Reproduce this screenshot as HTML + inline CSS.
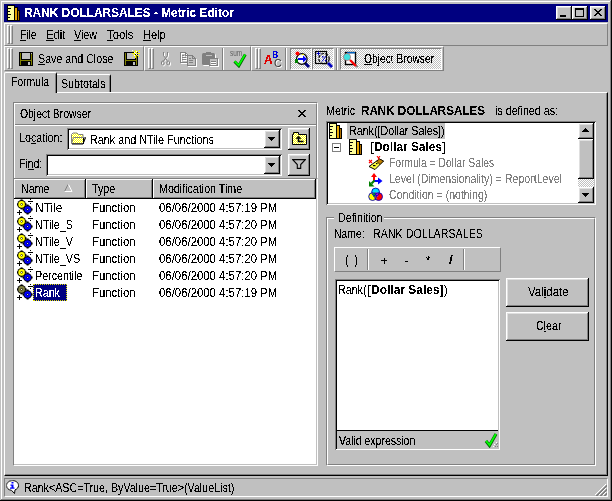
<!DOCTYPE html>
<html><head><meta charset="utf-8"><title>RANK DOLLARSALES - Metric Editor</title>
<style>
*{box-sizing:border-box;margin:0;padding:0}
html,body{width:612px;height:501px;overflow:hidden;background:#c0c0c0}
body{position:relative;font-family:"Liberation Sans",sans-serif;font-size:12.5px;line-height:13px;color:#000}
.a{position:absolute}
.t{position:absolute;white-space:nowrap;transform-origin:0 0;line-height:13px;filter:url(#thr)}
.b,b{font-weight:bold}
.g{color:#808080}
u{text-decoration:underline;text-decoration-thickness:1px;text-underline-offset:0.5px}
.hl{position:absolute;height:1px}
.vl{position:absolute;width:1px}
.W{background:#fff}.D{background:#808080}.K{background:#000}.L{background:#dfdfdf}
.raised{position:absolute;border:1px solid;border-color:#fff #808080 #808080 #fff}
.etch{position:absolute;border:1px solid;border-color:#808080 #fff #fff #808080}
.btn{position:absolute;background:#c0c0c0;box-shadow:inset -1px -1px 0 #000,inset 1px 1px 0 #fff,inset -2px -2px 0 #808080,inset 2px 2px 0 #dfdfdf}
.hdr{position:absolute;background:#c0c0c0;box-shadow:inset -1px -1px 0 #000,inset 1px 1px 0 #fff,inset -2px -2px 0 #808080}
.sunk{position:absolute;box-shadow:inset 1px 1px 0 #808080,inset -1px -1px 0 #fff,inset 2px 2px 0 #000,inset -2px -2px 0 #c0c0c0}
.dith{background-image:repeating-conic-gradient(#fff 0 25%,#c0c0c0 0 50%);background-size:2px 2px}
.chk{position:absolute;border:1px solid;border-color:#808080 #fff #fff #808080;background-image:repeating-conic-gradient(#fff 0 25%,#c0c0c0 0 50%);background-size:2px 2px}
.grip{position:absolute;width:3px;border:1px solid;border-color:#fff #808080 #808080 #fff}
</style></head><body>
<svg width="0" height="0" style="position:absolute"><filter id="thr" x="-5%" y="-5%" width="110%" height="110%" color-interpolation-filters="sRGB"><feComponentTransfer><feFuncA type="discrete" tableValues="0 0 0 0 0 0 0 0 0 1 1 1 1 1 1 1 1 1 1 1"/></feComponentTransfer></filter></svg>
<!-- window frame -->
<div class="a" style="left:0;top:0;width:612px;height:501px;box-shadow:inset -1px -1px 0 #000,inset 1px 1px 0 #c0c0c0,inset -2px -2px 0 #808080,inset 2px 2px 0 #fff"></div>
<!-- title bar -->
<div class="a" style="left:4px;top:4px;width:604px;height:18px;background:#000080"></div>
<svg class="a" style="left:7px;top:5px" width="13" height="16" viewBox="0 0 13 16" shape-rendering="crispEdges"><rect x="0" y="0" width="8" height="16" fill="#000"/><rect x="1" y="1" width="6" height="14" fill="#ffff99"/><rect x="1" y="3" width="3" height="1" fill="#000"/><rect x="1" y="6" width="2" height="1" fill="#000"/><rect x="1" y="9" width="3" height="1" fill="#000"/><rect x="1" y="12" width="2" height="1" fill="#000"/><rect x="8" y="2" width="3" height="14" fill="#000"/><rect x="8" y="3" width="2" height="12" fill="#e8a800"/><rect x="11" y="5" width="2" height="11" fill="#000"/><rect x="11" y="6" width="1" height="9" fill="#b07000"/></svg>
<div class="t b" style="left:24px;top:7px;transform:scaleX(0.95);color:#fff;">RANK DOLLARSALES - Metric Editor</div>
<div class="btn" style="left:556px;top:6px;width:16px;height:14px"><div class="a K" style="left:4px;top:9px;width:6px;height:2px"></div></div>
<div class="btn" style="left:572px;top:6px;width:16px;height:14px"><div class="a" style="left:3px;top:2px;width:9px;height:9px;border:1px solid #000;border-top-width:2px"></div></div>
<div class="btn" style="left:590px;top:6px;width:16px;height:14px"><svg class="a" style="left:4px;top:3px" width="8" height="7" viewBox="0 0 8 7" shape-rendering="crispEdges"><path d="M0 0h2v1h1v1h2v-1h1v-1h2v1h-1v1h-1v1h-1v1h1v1h1v1h1v1h-2v-1h-1v-1h-2v1h-1v1h-2v-1h1v-1h1v-1h1v-1h-1v-1h-1v-1h-1z" fill="#000"/></svg></div>

<!-- menu band -->
<div class="raised" style="left:4px;top:23px;width:604px;height:23px"></div>
<div class="grip" style="left:7px;top:25px;height:19px"></div><div class="grip" style="left:10px;top:25px;height:19px"></div>
<div class="t " style="left:20px;top:29px;transform:scaleX(0.82);"><u>F</u>ile</div>
<div class="t " style="left:46px;top:29px;transform:scaleX(0.9);"><u>E</u>dit</div>
<div class="t " style="left:74px;top:29px;transform:scaleX(0.855);"><u>V</u>iew</div>
<div class="t " style="left:107px;top:29px;transform:scaleX(0.9);"><u>T</u>ools</div>
<div class="t " style="left:143px;top:29px;transform:scaleX(0.88);"><u>H</u>elp</div>

<!-- toolbar band -->
<div class="raised" style="left:4px;top:46px;width:140px;height:25px"></div>
<div class="raised" style="left:144px;top:46px;width:107px;height:25px"></div>
<div class="raised" style="left:251px;top:46px;width:193px;height:25px"></div>
<div class="grip" style="left:7px;top:48px;height:21px"></div><div class="grip" style="left:10px;top:48px;height:21px"></div>
<svg class="a" style="left:19px;top:52px" width="14" height="14" viewBox="0 0 14 14" shape-rendering="crispEdges"><rect x="0" y="0" width="14" height="14" fill="#000"/><rect x="1" y="1" width="12" height="12" fill="#808000"/><rect x="2" y="0" width="10" height="8" fill="#000"/><rect x="3" y="1" width="8" height="6" fill="#c0c0c0"/><rect x="12" y="1" width="1" height="1" fill="#c0c0c0"/><rect x="2" y="9" width="10" height="5" fill="#000"/><rect x="9" y="10" width="2" height="3" fill="#c0c0c0"/></svg>
<div class="t " style="left:38px;top:53px;transform:scaleX(0.855);"><u>S</u>ave and Close</div>
<svg class="a" style="left:124px;top:52px" width="14" height="14" viewBox="0 0 14 14" shape-rendering="crispEdges"><rect x="0" y="0" width="14" height="14" fill="#000"/><rect x="1" y="1" width="12" height="12" fill="#808000"/><rect x="2" y="0" width="10" height="8" fill="#000"/><rect x="3" y="1" width="8" height="6" fill="#c0c0c0"/><rect x="12" y="1" width="1" height="1" fill="#c0c0c0"/><rect x="2" y="9" width="10" height="5" fill="#000"/><rect x="9" y="10" width="2" height="3" fill="#c0c0c0"/></svg><svg class="a" style="left:131px;top:49px" width="10" height="10" viewBox="0 0 10 10" shape-rendering="crispEdges"><g fill="#ffff00"><rect x="4" y="1" width="1" height="3"/><rect x="4" y="6" width="1" height="3"/><rect x="1" y="4" width="3" height="1"/><rect x="6" y="4" width="3" height="1"/><rect x="2" y="2" width="1" height="1"/><rect x="6" y="2" width="1" height="1"/><rect x="2" y="6" width="1" height="1"/><rect x="6" y="6" width="1" height="1"/><rect x="8" y="1" width="1" height="1"/><rect x="5" y="3" width="1" height="1"/><rect x="3" y="5" width="1" height="1"/><rect x="7" y="7" width="1" height="1"/><rect x="1" y="8" width="1" height="1"/></g><g fill="#fff"><rect x="3" y="3" width="1" height="1"/><rect x="5" y="5" width="1" height="1"/><rect x="4" y="4" width="1" height="1"/><rect x="5" y="2" width="1" height="1"/><rect x="1" y="1" width="1" height="1"/><rect x="3" y="6" width="1" height="1"/></g></svg>
<div class="grip" style="left:148px;top:48px;height:21px"></div><div class="grip" style="left:151px;top:48px;height:21px"></div>
<svg class="a" style="left:161px;top:52px" width="12" height="15" viewBox="0 0 12 15"><g fill="none" stroke="#fff" transform="translate(1 1)"><path d="M2.500 0v3.500l4 5.500M6.500 0v3.500l-4 5.500"/><ellipse cx="1.800" cy="11" rx="1.400" ry="2"/><ellipse cx="7.200" cy="11" rx="1.400" ry="2"/></g><g fill="none" stroke="#808080"><path d="M2.500 0v3.500l4 5.500M6.500 0v3.500l-4 5.500"/><ellipse cx="1.800" cy="11" rx="1.400" ry="2"/><ellipse cx="7.200" cy="11" rx="1.400" ry="2"/></g></svg><svg class="a" style="left:180px;top:52px" width="17" height="15" viewBox="0 0 17 15" shape-rendering="crispEdges"><g transform="translate(1 1)"><path d="M0.5 0.5h5l3 3v7h-8z M5.5 0.5v3h3" fill="none" stroke="#fff"/><path d="M2 3.5h2M2 5.5h4M2 7.5h4" stroke="#fff"/><path d="M7.5 3.5h5l3 3v7h-8z M12.5 3.5v3h3" fill="none" stroke="#fff"/><path d="M9 6.5h2M9 8.5h4M9 10.5h4" stroke="#fff"/></g><path d="M0.5 0.5h5l3 3v7h-8z M5.5 0.5v3h3" fill="none" stroke="#808080"/><path d="M2 3.5h2M2 5.5h4M2 7.5h4" stroke="#808080"/><rect x="8" y="4" width="7" height="9" fill="#c0c0c0"/><path d="M7.5 3.5h5l3 3v7h-8z M12.5 3.5v3h3" fill="none" stroke="#808080"/><path d="M9 6.5h2M9 8.5h4M9 10.5h4" stroke="#808080"/></svg><svg class="a" style="left:202px;top:52px" width="17" height="15" viewBox="0 0 17 15"><rect x="1" y="2" width="13" height="12" rx="1.500" fill="#fff"/><rect x="0" y="1" width="13" height="12" rx="1.500" fill="#808080"/><rect x="4" y="0" width="5" height="2" fill="#808080"/><rect x="4" y="3" width="6" height="1" fill="#c0c0c0"/><rect x="8.500" y="7.500" width="8" height="7" fill="#808080" stroke="#fff"/><rect x="7.500" y="6.500" width="8" height="7" fill="#c0c0c0" stroke="#808080"/><path d="M9 10.500h5M9 12.500h5" stroke="#fff"/><path d="M9 9.500h5M9 11.500h5" stroke="#808080"/></svg>
<div class="vl D" style="left:222px;top:48px;height:22px"></div><div class="vl W" style="left:223px;top:48px;height:22px"></div>
<div class="t " style="left:230px;top:47px;transform:scaleX(0.72);font-size:9px;filter:none;color:#606060;">sum</div><svg class="a" style="left:232px;top:51px" width="16" height="17" viewBox="0 0 16 17"><path d="M2.500 10.500l4.300 4.300l6.500-11.300" fill="none" stroke="#006000" stroke-width="3"/><path d="M2.500 10.200l4.200 4.100l6.400-10.800" fill="none" stroke="#00ff00" stroke-width="1.700"/></svg>
<div class="grip" style="left:255px;top:48px;height:21px"></div><div class="grip" style="left:258px;top:48px;height:21px"></div>
<div class="t b" style="left:264px;top:54px;transform:scaleX(1);font-size:12px;color:#e00000;">A</div><div class="t b" style="left:272px;top:48px;transform:scaleX(0.95);font-size:10px;color:#0000e0;font-family:'Liberation Serif',serif;">B</div><div class="t " style="left:274px;top:57px;transform:scaleX(1.05);font-size:10px;color:#303030;filter:none;text-shadow:1px 1px 0 #fff;">C</div>
<div class="vl D" style="left:285px;top:48px;height:22px"></div><div class="vl W" style="left:286px;top:48px;height:22px"></div>
<div class="chk" style="left:290px;top:48px;width:22px;height:22px"></div><svg class="a" style="left:293px;top:50px" width="18" height="19" viewBox="0 0 18 19"><path d="M12 13l4 4" stroke="#000080" stroke-width="3"/><circle cx="8.8" cy="9" r="5.3" fill="#fff" stroke="#000" stroke-width="1.2"/><path d="M5 8h5v-2.5l4 3.5l-4 3.5v-2.5h-5z" fill="#0000ff"/><circle cx="4.5" cy="3.5" r="2" fill="#ff0000"/><rect x="2" y="9" width="3" height="4" fill="#008000"/><rect x="9" y="4" width="2" height="1" fill="#e0e000"/></svg>
<div class="chk" style="left:312px;top:48px;width:22px;height:22px"></div><svg class="a" style="left:314px;top:50px" width="19" height="19" viewBox="0 0 19 19"><rect x="1.5" y="1.5" width="11" height="12" fill="none" stroke="#000" stroke-width="1.2"/><path d="M14 13l4 4" stroke="#0000c0" stroke-width="3"/><circle cx="10" cy="8.7" r="5.2" fill="none" stroke="#000" stroke-width="1.2" stroke-dasharray="3 1.2"/><path d="M4.5 1.5v4M2.5 3.5h4" stroke="#0000c0"/><path d="M12 6l-4 5.5" stroke="#0000c0"/><rect x="8" y="6" width="1.5" height="1.5" fill="#0000c0"/><rect x="11" y="10" width="1.5" height="1.5" fill="#0000c0"/></svg>
<div class="vl D" style="left:336px;top:48px;height:22px"></div><div class="vl W" style="left:337px;top:48px;height:22px"></div>
<div class="chk" style="left:340px;top:48px;width:102px;height:22px"></div><svg class="a" style="left:342px;top:51px" width="16" height="17" viewBox="0 0 16 17"><rect x="3.5" y="1.5" width="10" height="12" fill="#fff" stroke="#000" stroke-width="1.4"/><rect x="5" y="1" width="8" height="1.4" fill="#0060c0"/><path d="M8 9l6.5 6.5" stroke="#808080" stroke-width="2" transform="translate(1 .6)"/><path d="M8 9l6 6" stroke="#ff0000" stroke-width="2.2"/><circle cx="5" cy="6" r="3.6" fill="#40e0e0"/><circle cx="5" cy="6" r="3.6" fill="none" stroke="#c04040" stroke-width=".5"/></svg>
<div class="t " style="left:364px;top:53px;transform:scaleX(0.82);"><u>O</u>bject Browser</div>

<!-- tab control -->
<div class="a" style="left:4px;top:92px;width:604px;height:384px;border:1px solid;border-color:#fff #000 #000 #fff"></div>
<div class="vl D" style="left:606px;top:93px;height:382px"></div>
<div class="hl D" style="left:5px;top:474px;width:602px"></div>
<div class="a" style="left:57px;top:74px;width:54px;height:18px;border-top:1px solid #fff;border-right:1px solid #000;border-radius:0 2px 0 0"></div>
<div class="vl D" style="left:109px;top:76px;height:16px"></div>
<div class="t " style="left:61px;top:78px;transform:scaleX(0.855);">Subtotals</div>
<div class="a" style="left:4px;top:72px;width:53px;height:21px;background:#c0c0c0;border:1px solid;border-color:#fff #000 #c0c0c0 #fff;border-bottom:none;border-radius:2px 2px 0 0"></div>
<div class="vl D" style="left:55px;top:74px;height:19px"></div>
<div class="t " style="left:11px;top:76px;transform:scaleX(0.83);">Formula</div>

<!-- object browser pane -->
<div class="etch" style="left:13px;top:102px;width:305px;height:364px"></div>
<div class="raised" style="left:14px;top:103px;width:303px;height:362px"></div>
<div class="t " style="left:20px;top:108px;transform:scaleX(0.83);">Object Browser</div>
<svg class="a" style="left:298px;top:110px" width="8" height="7" viewBox="0 0 8 7" shape-rendering="crispEdges"><path d="M0 0h2v1h1v1h2v-1h1v-1h2v1h-1v1h-1v1h-1v1h1v1h1v1h1v1h-2v-1h-1v-1h-2v1h-1v1h-2v-1h1v-1h1v-1h1v-1h-1v-1h-1v-1h-1z" fill="#000"/></svg>
<div class="hl D" style="left:15px;top:124px;width:301px"></div><div class="hl W" style="left:15px;top:125px;width:301px"></div>
<div class="t " style="left:19px;top:132px;transform:scaleX(0.855);">Lo<u>c</u>ation:</div>
<div class="sunk" style="left:67px;top:128px;width:215px;height:22px;background:#fff"></div>
<svg class="a" style="left:70px;top:132px" width="16" height="13" viewBox="0 0 16 13"><pattern id="yd1" width="2" height="2" patternUnits="userSpaceOnUse"><rect width="2" height="2" fill="#ffff00"/><rect width="1" height="1" fill="#fff"/><rect x="1" y="1" width="1" height="1" fill="#fff"/></pattern><path d="M1.500 11.500v-9l1.500-1.500h4l1.500 1.500h4.500v3" fill="url(#yd1)" stroke="#808080"/><path d="M1.500 11.500l2-6h12l-2.500 6z" fill="url(#yd1)" stroke="#808080"/><path d="M15.500 5.500l-2.500 6.500h-11" stroke="#000" fill="none"/><path d="M13.500 6v6" stroke="#000" fill="none"/></svg>
<div class="btn" style="left:264px;top:130px;width:16px;height:18px"><svg class="a" style="left:4px;top:7px" width="7" height="4" viewBox="0 0 7 4" shape-rendering="crispEdges"><rect x="0" y="0" width="7" height="1" fill="#000"/><rect x="1" y="1" width="5" height="1" fill="#000"/><rect x="2" y="2" width="3" height="1" fill="#000"/><rect x="3" y="3" width="1" height="1" fill="#000"/></svg></div>
<div class="t " style="left:90px;top:134px;transform:scaleX(0.865);">Rank and NTile Functions</div>
<div class="btn" style="left:288px;top:128px;width:22px;height:22px"></div><svg class="a" style="left:292px;top:132px" width="15" height="13" viewBox="0 0 15 13"><pattern id="yd2" width="2" height="2" patternUnits="userSpaceOnUse"><rect width="2" height="2" fill="#ffff00"/><rect width="1" height="1" fill="#fff"/><rect x="1" y="1" width="1" height="1" fill="#fff"/></pattern><path d="M.5 12.500v-10h1v-2h5v2h8v10z" fill="url(#yd2)" stroke="#000"/><path d="M4 6.500l2.500-2.500l2.500 2.500z" fill="#000" stroke="#000" stroke-width=".6"/><path d="M6.500 6v3.500h5" fill="none" stroke="#000" stroke-width="1.600"/></svg>
<div class="t " style="left:19px;top:158px;transform:scaleX(0.84);">Fi<u>n</u>d:</div>
<div class="sunk" style="left:46px;top:154px;width:236px;height:22px;background:#fff"></div>
<div class="btn" style="left:264px;top:156px;width:16px;height:18px"><svg class="a" style="left:4px;top:7px" width="7" height="4" viewBox="0 0 7 4" shape-rendering="crispEdges"><rect x="0" y="0" width="7" height="1" fill="#000"/><rect x="1" y="1" width="5" height="1" fill="#000"/><rect x="2" y="2" width="3" height="1" fill="#000"/><rect x="3" y="3" width="1" height="1" fill="#000"/></svg></div>
<div class="btn" style="left:288px;top:154px;width:22px;height:22px"></div><svg class="a" style="left:292px;top:159px" width="14" height="10" viewBox="0 0 14 10"><path d="M.7 .6h12.6l-4.6 4.9v3.9h-3.4v-3.9z" fill="#c0c0c0" stroke="#000" stroke-width="1.1"/></svg>

<!-- list view -->
<div class="a" style="left:13px;top:178px;width:305px;height:288px;background:#fff;border:1px solid;border-color:#808080 #fff #fff #808080"></div>
<div class="hl" style="left:14px;top:464px;width:303px;background:#c0c0c0"></div>
<div class="vl" style="left:316px;top:179px;height:286px;background:#c0c0c0"></div>
<div class="hdr" style="left:14px;top:179px;width:72px;height:20px"></div>
<div class="hdr" style="left:86px;top:179px;width:67px;height:20px"></div>
<div class="hdr" style="left:153px;top:179px;width:163px;height:20px"></div>
<div class="t " style="left:21px;top:183px;transform:scaleX(0.855);">Name</div>
<div class="t " style="left:92px;top:183px;transform:scaleX(0.855);">Type</div>
<div class="t " style="left:158.5px;top:183px;transform:scaleX(0.855);">Modification Time</div>
<svg class="a" style="left:64px;top:184px" width="9" height="8" viewBox="0 0 9 8"><path d="M.5 7.500L4 .5" stroke="#808080" fill="none"/><path d="M4.500 .5L8 7.500H.5" stroke="#fff" fill="none"/></svg>
<svg class="a" style="left:17px;top:199px" width="17" height="17" viewBox="0 0 17 17"><circle cx="4.6" cy="5.4" r="4.300" fill="#000"/><rect x="3.5999999999999996" y="0.40000000000000036" width="2" height="10" fill="#000"/><rect x="-0.40000000000000036" y="4.4" width="10" height="2" fill="#000"/><circle cx="4.6" cy="5.4" r="3.300" fill="#ffff00"/><circle cx="4.6" cy="5.4" r="1.100" fill="#000"/><circle cx="4.6" cy="5.4" r=".6" fill="#fff"/><circle cx="10.6" cy="10.5" r="4.300" fill="#000"/><rect x="9.6" y="5.5" width="2" height="10" fill="#000"/><rect x="5.6" y="9.5" width="10" height="2" fill="#000"/><circle cx="10.6" cy="10.5" r="3.300" fill="#0000ff"/><circle cx="10.6" cy="10.5" r="1.100" fill="#000"/><circle cx="10.6" cy="10.5" r=".6" fill="#fff"/><path d="M11 2.500h5M0 13.500h5M2.500 11v5" stroke="#000" stroke-width="1" fill="none"/><rect x="13" y="0" width="1" height="1"/><rect x="13" y="4" width="1" height="1"/></svg><div class="t " style="left:34.5px;top:202px;transform:scaleX(0.95);">NTile</div><div class="t " style="left:92px;top:202px;transform:scaleX(0.91);">Function</div><div class="t " style="left:159px;top:202px;transform:scaleX(0.91);">06/06/2000 4:57:19 PM</div>
<svg class="a" style="left:17px;top:216px" width="17" height="17" viewBox="0 0 17 17"><circle cx="4.6" cy="5.4" r="4.300" fill="#000"/><rect x="3.5999999999999996" y="0.40000000000000036" width="2" height="10" fill="#000"/><rect x="-0.40000000000000036" y="4.4" width="10" height="2" fill="#000"/><circle cx="4.6" cy="5.4" r="3.300" fill="#ffff00"/><circle cx="4.6" cy="5.4" r="1.100" fill="#000"/><circle cx="4.6" cy="5.4" r=".6" fill="#fff"/><circle cx="10.6" cy="10.5" r="4.300" fill="#000"/><rect x="9.6" y="5.5" width="2" height="10" fill="#000"/><rect x="5.6" y="9.5" width="10" height="2" fill="#000"/><circle cx="10.6" cy="10.5" r="3.300" fill="#0000ff"/><circle cx="10.6" cy="10.5" r="1.100" fill="#000"/><circle cx="10.6" cy="10.5" r=".6" fill="#fff"/><path d="M11 2.500h5M0 13.500h5M2.500 11v5" stroke="#000" stroke-width="1" fill="none"/><rect x="13" y="0" width="1" height="1"/><rect x="13" y="4" width="1" height="1"/></svg><div class="t " style="left:34.5px;top:219px;transform:scaleX(0.865);">NTile_S</div><div class="t " style="left:92px;top:219px;transform:scaleX(0.91);">Function</div><div class="t " style="left:159px;top:219px;transform:scaleX(0.91);">06/06/2000 4:57:20 PM</div>
<svg class="a" style="left:17px;top:233px" width="17" height="17" viewBox="0 0 17 17"><circle cx="4.6" cy="5.4" r="4.300" fill="#000"/><rect x="3.5999999999999996" y="0.40000000000000036" width="2" height="10" fill="#000"/><rect x="-0.40000000000000036" y="4.4" width="10" height="2" fill="#000"/><circle cx="4.6" cy="5.4" r="3.300" fill="#ffff00"/><circle cx="4.6" cy="5.4" r="1.100" fill="#000"/><circle cx="4.6" cy="5.4" r=".6" fill="#fff"/><circle cx="10.6" cy="10.5" r="4.300" fill="#000"/><rect x="9.6" y="5.5" width="2" height="10" fill="#000"/><rect x="5.6" y="9.5" width="10" height="2" fill="#000"/><circle cx="10.6" cy="10.5" r="3.300" fill="#0000ff"/><circle cx="10.6" cy="10.5" r="1.100" fill="#000"/><circle cx="10.6" cy="10.5" r=".6" fill="#fff"/><path d="M11 2.500h5M0 13.500h5M2.500 11v5" stroke="#000" stroke-width="1" fill="none"/><rect x="13" y="0" width="1" height="1"/><rect x="13" y="4" width="1" height="1"/></svg><div class="t " style="left:34.5px;top:236px;transform:scaleX(0.865);">NTile_V</div><div class="t " style="left:92px;top:236px;transform:scaleX(0.91);">Function</div><div class="t " style="left:159px;top:236px;transform:scaleX(0.91);">06/06/2000 4:57:20 PM</div>
<svg class="a" style="left:17px;top:250px" width="17" height="17" viewBox="0 0 17 17"><circle cx="4.6" cy="5.4" r="4.300" fill="#000"/><rect x="3.5999999999999996" y="0.40000000000000036" width="2" height="10" fill="#000"/><rect x="-0.40000000000000036" y="4.4" width="10" height="2" fill="#000"/><circle cx="4.6" cy="5.4" r="3.300" fill="#ffff00"/><circle cx="4.6" cy="5.4" r="1.100" fill="#000"/><circle cx="4.6" cy="5.4" r=".6" fill="#fff"/><circle cx="10.6" cy="10.5" r="4.300" fill="#000"/><rect x="9.6" y="5.5" width="2" height="10" fill="#000"/><rect x="5.6" y="9.5" width="10" height="2" fill="#000"/><circle cx="10.6" cy="10.5" r="3.300" fill="#0000ff"/><circle cx="10.6" cy="10.5" r="1.100" fill="#000"/><circle cx="10.6" cy="10.5" r=".6" fill="#fff"/><path d="M11 2.500h5M0 13.500h5M2.500 11v5" stroke="#000" stroke-width="1" fill="none"/><rect x="13" y="0" width="1" height="1"/><rect x="13" y="4" width="1" height="1"/></svg><div class="t " style="left:34.5px;top:253px;transform:scaleX(0.865);">NTile_VS</div><div class="t " style="left:92px;top:253px;transform:scaleX(0.91);">Function</div><div class="t " style="left:159px;top:253px;transform:scaleX(0.91);">06/06/2000 4:57:20 PM</div>
<svg class="a" style="left:17px;top:267px" width="17" height="17" viewBox="0 0 17 17"><circle cx="4.6" cy="5.4" r="4.300" fill="#000"/><rect x="3.5999999999999996" y="0.40000000000000036" width="2" height="10" fill="#000"/><rect x="-0.40000000000000036" y="4.4" width="10" height="2" fill="#000"/><circle cx="4.6" cy="5.4" r="3.300" fill="#ffff00"/><circle cx="4.6" cy="5.4" r="1.100" fill="#000"/><circle cx="4.6" cy="5.4" r=".6" fill="#fff"/><circle cx="10.6" cy="10.5" r="4.300" fill="#000"/><rect x="9.6" y="5.5" width="2" height="10" fill="#000"/><rect x="5.6" y="9.5" width="10" height="2" fill="#000"/><circle cx="10.6" cy="10.5" r="3.300" fill="#0000ff"/><circle cx="10.6" cy="10.5" r="1.100" fill="#000"/><circle cx="10.6" cy="10.5" r=".6" fill="#fff"/><path d="M11 2.500h5M0 13.500h5M2.500 11v5" stroke="#000" stroke-width="1" fill="none"/><rect x="13" y="0" width="1" height="1"/><rect x="13" y="4" width="1" height="1"/></svg><div class="t " style="left:34.5px;top:270px;transform:scaleX(0.855);">Percentile</div><div class="t " style="left:92px;top:270px;transform:scaleX(0.91);">Function</div><div class="t " style="left:159px;top:270px;transform:scaleX(0.91);">06/06/2000 4:57:20 PM</div>
<div class="a" style="left:33px;top:284px;width:34px;height:17px;background:#000080;border:1px dotted #e0e000"></div><svg class="a" style="left:17px;top:284px" width="17" height="17" viewBox="0 0 17 17"><circle cx="4.6" cy="5.4" r="4.300" fill="#000"/><rect x="3.5999999999999996" y="0.40000000000000036" width="2" height="10" fill="#000"/><rect x="-0.40000000000000036" y="4.4" width="10" height="2" fill="#000"/><circle cx="4.6" cy="5.4" r="3.300" fill="#808040"/><circle cx="4.6" cy="5.4" r="1.100" fill="#000"/><circle cx="4.6" cy="5.4" r=".6" fill="#fff"/><circle cx="10.6" cy="10.5" r="4.300" fill="#000"/><rect x="9.6" y="5.5" width="2" height="10" fill="#000"/><rect x="5.6" y="9.5" width="10" height="2" fill="#000"/><circle cx="10.6" cy="10.5" r="3.300" fill="#0000ff"/><circle cx="10.6" cy="10.5" r="1.100" fill="#000"/><circle cx="10.6" cy="10.5" r=".6" fill="#fff"/><path d="M11 2.500h5M0 13.500h5M2.500 11v5" stroke="#000" stroke-width="1" fill="none"/><rect x="13" y="0" width="1" height="1"/><rect x="13" y="4" width="1" height="1"/></svg><div class="t " style="left:34.5px;top:287px;transform:scaleX(0.855);color:#fff;">Rank</div><div class="t " style="left:92px;top:287px;transform:scaleX(0.91);">Function</div><div class="t " style="left:159px;top:287px;transform:scaleX(0.91);">06/06/2000 4:57:19 PM</div>

<!-- right: metric label -->
<div class="t " style="left:326px;top:105px;transform:scaleX(0.855);">Metric</div>
<div class="t b" style="left:361px;top:105px;transform:scaleX(0.93);">RANK DOLLARSALES</div>
<div class="t " style="left:495px;top:105px;transform:scaleX(0.855);">is defined as:</div>
<!-- tree -->
<div class="sunk" style="left:326px;top:121px;width:270px;height:84px;background:#fff"></div>
<div class="a" style="left:347px;top:123px;width:98px;height:16px;background:#c0c0c0"></div>
<svg class="a" style="left:329px;top:123px" width="13" height="16" viewBox="0 0 13 16" shape-rendering="crispEdges"><rect x="0" y="0" width="8" height="16" fill="#000"/><rect x="1" y="1" width="6" height="14" fill="#ffff99"/><rect x="1" y="3" width="3" height="1" fill="#000"/><rect x="1" y="6" width="2" height="1" fill="#000"/><rect x="1" y="9" width="3" height="1" fill="#000"/><rect x="1" y="12" width="2" height="1" fill="#000"/><rect x="8" y="2" width="3" height="14" fill="#000"/><rect x="8" y="3" width="2" height="12" fill="#e8a800"/><rect x="11" y="5" width="2" height="11" fill="#000"/><rect x="11" y="6" width="1" height="9" fill="#b07000"/></svg>
<div class="t " style="left:348.5px;top:125px;transform:scaleX(0.855);">Rank([Dollar Sales])</div>
<div class="a" style="left:332px;top:143px;width:9px;height:9px;border:1px solid #808080"><div class="a K" style="left:1px;top:3px;width:5px;height:1px"></div></div>
<svg class="a" style="left:349px;top:139px" width="13" height="16" viewBox="0 0 13 16" shape-rendering="crispEdges"><rect x="0" y="0" width="8" height="16" fill="#000"/><rect x="1" y="1" width="6" height="14" fill="#ffff99"/><rect x="1" y="3" width="3" height="1" fill="#000"/><rect x="1" y="6" width="2" height="1" fill="#000"/><rect x="1" y="9" width="3" height="1" fill="#000"/><rect x="1" y="12" width="2" height="1" fill="#000"/><rect x="8" y="2" width="3" height="14" fill="#000"/><rect x="8" y="3" width="2" height="12" fill="#e8a800"/><rect x="11" y="5" width="2" height="11" fill="#000"/><rect x="11" y="6" width="1" height="9" fill="#b07000"/></svg>
<div class="t b" style="left:370px;top:141px;transform:scaleX(0.95);">[Dollar Sales]</div>
<svg class="a" style="left:368px;top:156px" width="17" height="15" viewBox="0 0 17 15"><path d="M1 10.500L11.500 3L15.500 5L7 13.500z" fill="#ffff40" stroke="#000" stroke-width="1"/><path d="M11.500 3L15.500 5L12 8.500L8.500 5.200z" fill="#c08000" stroke="#000" stroke-width=".7"/><rect x="5" y="9" width="2.500" height="1.200" fill="#000"/><rect x="8" y="7" width="1.500" height="1.200" fill="#000"/><path d="M1 4l3 3M4 4l-3 3" stroke="#f00" stroke-width="1.100"/><path d="M9 0l1.500 2l1.500-2M10.500 2v1.800" stroke="#f00" stroke-width="1.100" fill="none"/></svg><svg class="a" style="left:369px;top:173px" width="14" height="14" viewBox="0 0 14 14"><path d="M5 8v-5" stroke="#ff0000" stroke-width="2"/><path d="M2 4l3-4l3 4z" fill="#ff0000"/><path d="M5 8h5" stroke="#0000ff" stroke-width="2"/><path d="M9 4.500l4.500 3.500l-4.500 3.500z" fill="#0000ff"/><path d="M5.500 7.500l-3 3" stroke="#008000" stroke-width="2.200"/><path d="M0 8v5.500h5.500z" fill="#008000"/></svg><svg class="a" style="left:368px;top:187px" width="16" height="15" viewBox="0 0 16 15"><circle cx="7.600" cy="5" r="3.900" fill="#00e0ff"/><circle cx="4.600" cy="9.600" r="3.900" fill="#ffff00"/><circle cx="10.600" cy="9.600" r="3.900" fill="#ff0000"/><path d="M5 6.500l2.600-1.500v4l-2.600 1z" fill="#00c000"/><path d="M10.200 6.500l-2.600-1.500v4l2.600 1z" fill="#e000e0"/><path d="M5.800 11l1.800-2l1.800 2l-1.800 2.300z" fill="#ff9000"/><path d="M6.400 9l1.200-1.500l1.200 1.500z" fill="#fff"/><circle cx="7.600" cy="5" r="3.900" fill="none" stroke="#0000c0" stroke-width=".9"/><circle cx="4.600" cy="9.600" r="3.900" fill="none" stroke="#0000c0" stroke-width=".9"/><circle cx="10.600" cy="9.600" r="3.900" fill="none" stroke="#0000c0" stroke-width=".9"/></svg>
<div class="t g" style="left:388.5px;top:157px;transform:scaleX(0.825);">Formula = Dollar Sales</div>
<div class="t g" style="left:388.5px;top:173px;transform:scaleX(0.845);">Level (Dimensionality) = ReportLevel</div>
<div class="t g" style="left:388.5px;top:189px;transform:scaleX(0.845);">Condition = (nothing)</div>
<div class="a dith" style="left:578px;top:123px;width:16px;height:80px"></div>
<div class="btn" style="left:578px;top:123px;width:16px;height:16px"><svg class="a" style="left:4px;top:5px" width="7" height="4" viewBox="0 0 7 4" shape-rendering="crispEdges"><rect x="0" y="3" width="7" height="1" fill="#000"/><rect x="1" y="2" width="5" height="1" fill="#000"/><rect x="2" y="1" width="3" height="1" fill="#000"/><rect x="3" y="0" width="1" height="1" fill="#000"/></svg></div>
<div class="btn" style="left:578px;top:139px;width:16px;height:40px"></div>
<div class="btn" style="left:578px;top:187px;width:16px;height:16px"><svg class="a" style="left:4px;top:6px" width="7" height="4" viewBox="0 0 7 4" shape-rendering="crispEdges"><rect x="0" y="0" width="7" height="1" fill="#000"/><rect x="1" y="1" width="5" height="1" fill="#000"/><rect x="2" y="2" width="3" height="1" fill="#000"/><rect x="3" y="3" width="1" height="1" fill="#000"/></svg></div>

<!-- groupbox -->
<div class="etch" style="left:326px;top:217px;width:270px;height:249px"></div>
<div class="raised" style="left:327px;top:218px;width:268px;height:247px"></div>
<div class="a" style="left:334px;top:212px;width:50px;height:12px;background:#c0c0c0"></div>
<div class="t " style="left:337.5px;top:212px;transform:scaleX(0.855);">Definition</div>
<div class="t " style="left:334px;top:228px;transform:scaleX(0.83);">Name:</div>
<div class="t " style="left:373px;top:228px;transform:scaleX(0.855);">RANK DOLLARSALES</div>
<div class="raised" style="left:334px;top:247px;width:167px;height:25px"></div>
<div class="t " style="left:345px;top:254px;transform:scaleX(0.855);">(&nbsp;&nbsp;)</div>
<div class="vl D" style="left:367px;top:249px;height:21px"></div><div class="vl W" style="left:368px;top:249px;height:21px"></div>
<div class="t " style="left:381px;top:255px;transform:scaleX(0.855);">+</div>
<div class="t " style="left:405px;top:255px;transform:scaleX(0.855);">-</div>
<div class="t " style="left:425.5px;top:254px;transform:scaleX(1);font-size:13px;">*</div>
<div class="t b" style="left:448.5px;top:254px;transform:scaleX(1.1);">/</div>
<div class="vl D" style="left:463px;top:249px;height:21px"></div><div class="vl W" style="left:464px;top:249px;height:21px"></div>
<div class="sunk" style="left:335px;top:279px;width:165px;height:171px;background:#c0c0c0"></div>
<div class="a W" style="left:337px;top:281px;width:161px;height:149px"></div>
<div class="hl K" style="left:337px;top:430px;width:161px"></div>
<div class="t " style="left:338px;top:284px;transform:scaleX(0.855);">Rank(</div><div class="t b" style="left:367px;top:284px;transform:scaleX(0.96);">[Dollar Sales]</div><div class="t " style="left:443.5px;top:284px;transform:scaleX(0.855);">)</div>
<div class="t " style="left:339px;top:435px;transform:scaleX(0.84);">Valid expression</div>
<svg class="a" style="left:484px;top:432px" width="14" height="16" viewBox="0 0 14 16"><path d="M2 9l3.500 4.500l6.500-11.500" fill="none" stroke="#007000" stroke-width="3.200"/><path d="M2 8.800l3.500 4.200l6.300-11" fill="none" stroke="#00ff00" stroke-width="1.700"/></svg><svg class="a" style="left:493px;top:442px" width="5" height="6" viewBox="0 0 5 6" shape-rendering="crispEdges"><rect x="3" y="0" width="1" height="1" fill="#fff"/><rect x="1" y="2" width="1" height="1" fill="#fff"/><rect x="3" y="2" width="1" height="1" fill="#808080"/><rect x="0" y="4" width="1" height="1" fill="#fff"/><rect x="2" y="4" width="1" height="1" fill="#808080"/><rect x="4" y="4" width="1" height="1" fill="#808080"/><rect x="4" y="1" width="1" height="1" fill="#808080"/></svg>
<div class="btn" style="left:506px;top:278px;width:83px;height:29px"></div>
<div class="t " style="left:527.5px;top:286px;transform:scaleX(0.92);">Val<u>i</u>date</div>
<div class="btn" style="left:506px;top:312px;width:83px;height:29px"></div>
<div class="t " style="left:535.5px;top:320px;transform:scaleX(0.855);">C<u>l</u>ear</div>

<!-- status bar -->
<div class="etch" style="left:4px;top:478px;width:604px;height:19px"></div>
<svg class="a" style="left:6px;top:480px" width="14" height="15" viewBox="0 0 14 15"><path d="M6.500 .6c3.500 0 6 2 6 5c0 2-1.500 3.500-3.500 4.300l-.5 3.600l-3-3.200c-3-.300-5-2-5-4.700c0-3 2.500-5 6-5z" fill="#fff" stroke="#000" stroke-width="1"/><path d="M6.500 .6c-3.500 0-6 2-6 5c0 1.500 .6 2.700 1.700 3.500" fill="none" stroke="#808080" stroke-width="1"/><rect x="5.500" y="2" width="2" height="1.500" fill="#0000ff"/><path d="M4.500 4.500h3v3h1v1.200h-4.500v-1.200h1.500v-1.800h-1z" fill="#0000ff"/></svg>
<div class="t " style="left:24px;top:482px;transform:scaleX(0.855);">Rank&lt;ASC=True, ByValue=True&gt;(ValueList)</div>
<svg class="a" style="left:595px;top:484px" width="12" height="12" viewBox="0 0 12 12"><path d="M11 0L0 11M11 4L4 11M11 8L8 11" stroke="#fff" stroke-width="1" transform="translate(0 0)"/><path d="M12 1L1 12M12 2L2 12M12 5L5 12M12 6L6 12M12 9L9 12M12 10L10 12" stroke="#808080" stroke-width="1"/></svg>
</body></html>
